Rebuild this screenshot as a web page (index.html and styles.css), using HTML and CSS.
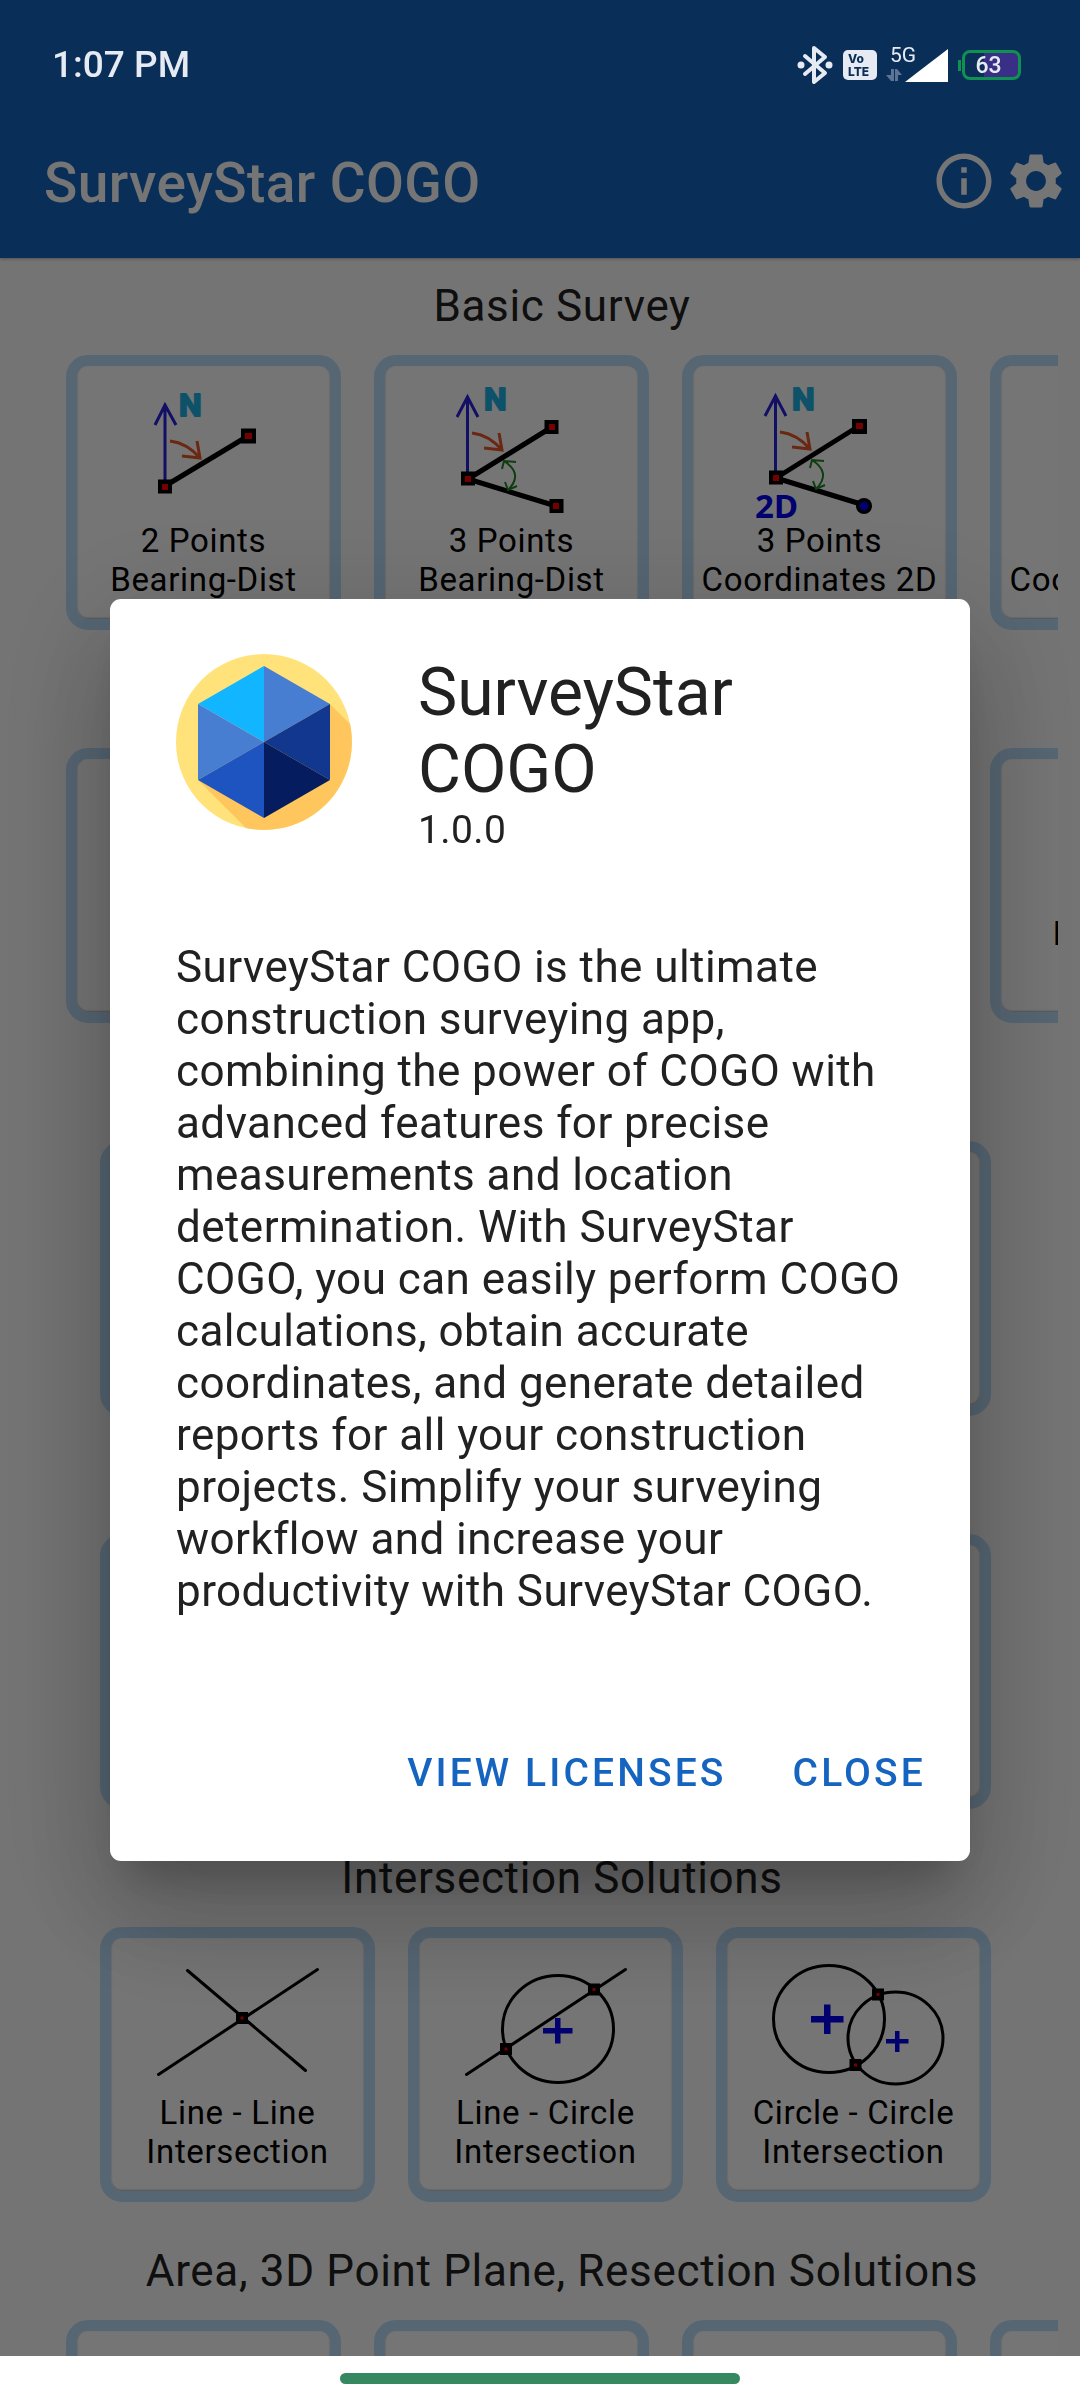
FILE: index.html
```html
<!DOCTYPE html>
<html lang="en">
<head>
<meta charset="utf-8">
<meta name="viewport" content="width=device-width, initial-scale=1">
<title>SurveyStar COGO</title>
<link rel="stylesheet" href="styles.css">
</head>
<body>
<div class="screen">
  <header class="appbar">
    <h1 class="appbar-title">SurveyStar COGO</h1>
    <button class="icon-button" type="button" aria-label="About">
      <svg viewBox="0 0 24 24" width="66" height="66"><path fill="currentColor" d="M11 7h2v2h-2zm0 4h2v6h-2zm1-9C6.48 2 2 6.48 2 12s4.480 10 10 10 10-4.480 10-10S17.520 2 12 2zm0 18c-4.410 0-8-3.590-8-8s3.590-8 8-8 8 3.590 8 8-3.590 8-8 8z"/></svg>
    </button>
    <button class="icon-button" type="button" aria-label="Settings">
      <svg viewBox="0 0 24 24" width="66" height="66"><path fill="currentColor" d="M19.140 12.940c.040-.300.060-.610.060-.940 0-.320-.020-.640-.070-.940l2.030-1.580c.180-.140.230-.410.120-.610l-1.920-3.320c-.120-.220-.370-.290-.590-.220l-2.390.960c-.500-.380-1.030-.700-1.620-.940l-.360-2.540c-.040-.240-.240-.410-.480-.410h-3.840c-.240 0-.430.170-.470.410l-.360 2.540c-.590.240-1.130.570-1.620.940l-2.390-.960c-.220-.080-.470 0-.590.220L2.740 8.870c-.120.210-.080.470.120.610l2.030 1.580c-.050.300-.090.630-.090.940s.020.640.070.940l-2.030 1.580c-.180.140-.230.410-.120.610l1.920 3.320c.120.220.370.290.590.220l2.390-.960c.500.380 1.030.700 1.620.940l.360 2.540c.050.240.240.410.480.410h3.840c.240 0 .440-.170.470-.410l.360-2.540c.590-.240 1.130-.560 1.620-.940l2.390.960c.220.080.470 0 .590-.220l1.920-3.320c.120-.220.070-.470-.120-.610l-2.010-1.580zM12 15.600c-1.980 0-3.600-1.620-3.600-3.600s1.620-3.600 3.600-3.600 3.600 1.620 3.600 3.600-1.620 3.600-3.600 3.600z"/></svg>
    </button>
  </header>

  <main class="content">
    <section class="group">
      <h2 class="group-title">Basic Survey</h2>
      <div class="card-row">
        <button class="card" type="button">
          <svg class="card-art" viewBox="0 0 253 155">
            <path class="north" d="M88 114V38M78 59L88 39L99 59"/>
            <text class="north-letter" x="102" y="50">N</text>
            <path class="bearing" d="M93 75Q110 77 123 92M120 75L123 92L105 90"/>
            <path class="leg" d="M88 120L171 70"/>
            <path d="M81 113.500h14v14h-14zM164 62.500h15v15h-15z"/>
            <path class="red" d="M85 118h6v6h-6zM168 67h7v6h-7z"/>
          </svg>
          <span class="card-label">2 Points<br>Bearing-Dist</span>
        </button>
        <button class="card" type="button">
          <svg class="card-art" viewBox="0 0 253 155">
            <path class="north" d="M82.500 106V30M72 51L82.500 31L93 51"/>
            <text class="north-letter" x="99" y="44">N</text>
            <path class="bearing" d="M87 67Q104 69 117 84M114 67L117 84L99 82"/>
            <path class="leg" d="M83 113L167 61M83 113L171 140"/>
            <path class="turn" d="M119 95Q139 108 123 124M131 96L119 95L117 103M120 116L123 124L132 120"/>
            <path d="M76 105.500h14v14h-14zM159.500 54h14v14h-14zM164.500 133h14v14h-14z"/>
            <path class="red" d="M80 110h6v6h-6zM164 58h6v6h-6zM168 137h6v6h-6z"/>
          </svg>
          <span class="card-label">3 Points<br>Bearing-Dist</span>
        </button>
        <button class="card" type="button">
          <svg class="card-art" viewBox="0 0 253 155">
            <path class="north" d="M82.500 105V29M72 50L82.500 30L93 50"/>
            <text class="north-letter" x="99" y="44">N</text>
            <path class="bearing" d="M87 66Q104 68 117 83M114 66L117 83L99 81"/>
            <path class="leg" d="M83 112L166 60M83 112L171 139"/>
            <path class="turn" d="M119 94Q139 107 123 123M131 95L119 94L117 102M120 115L123 123L132 119"/>
            <path d="M76 104.500h14v14h-14zM159 53h15v15h-15z"/>
            <path class="red" d="M80 109h6v6h-6zM163 57h7v6h-7z"/>
            <circle cx="171" cy="140" r="8"/>
            <circle class="blue" cx="171" cy="140" r="4.500"/>
            <text class="dimension" x="62" y="152">2D</text>
          </svg>
          <span class="card-label">3 Points<br>Coordinates 2D</span>
        </button>
        <button class="card" type="button">
          <svg class="card-art" viewBox="0 0 253 155"></svg>
          <span class="card-label">3 Points<br>Coordinates 3D</span>
        </button>
      </div>
    </section>

    <section class="group">
      <div class="group-title"></div>
      <div class="card-row">
        <div class="card"></div>
        <div class="card"></div>
        <div class="card"></div>
        <button class="card" type="button">
          <svg class="card-art" viewBox="0 0 253 155"></svg>
          <span class="card-label">Extension</span>
        </button>
      </div>
    </section>

    <section class="group">
      <div class="group-title"></div>
      <div class="card-row">
        <div class="card"></div>
        <div class="card"></div>
        <div class="card"></div>
      </div>
    </section>

    <section class="group">
      <div class="group-title"></div>
      <div class="card-row">
        <div class="card"></div>
        <div class="card"></div>
        <div class="card"></div>
      </div>
    </section>

    <section class="group">
      <h2 class="group-title">Intersection Solutions</h2>
      <div class="card-row">
        <button class="card" type="button">
          <svg class="card-art" viewBox="0 0 253 155">
            <path class="thin" d="M76.500 32.500L194.500 132.500M206.500 31.500L47.500 136.500"/>
            <path d="M125 74h12v12h-12z"/>
            <path class="red" d="M129.500 78.500h3v3h-3z"/>
          </svg>
          <span class="card-label">Line - Line<br>Intersection</span>
        </button>
        <button class="card" type="button">
          <svg class="card-art" viewBox="0 0 253 155">
            <path class="thin" d="M206.500 31.500L47.500 136.500"/>
            <ellipse class="thin" cx="139" cy="91" rx="55.500" ry="53.500"/>
            <path class="blue" d="M124 90h12v-10h5.500v10h12v5.500h-12v10h-5.500v-10h-12z"/>
            <path d="M81 105h12v12h-12zM169 45.500h12v12h-12z"/>
            <path class="red" d="M85.500 109.500h3v3h-3zM173.500 50h3v3h-3z"/>
          </svg>
          <span class="card-label">Line - Circle<br>Intersection</span>
        </button>
        <button class="card" type="button">
          <svg class="card-art" viewBox="0 0 253 155">
            <ellipse class="thin" cx="102" cy="81" rx="55.500" ry="53.500"/>
            <ellipse class="thin" cx="168.500" cy="100" rx="47.500" ry="46"/>
            <path class="blue" d="M84 78h13v-11.500h6.500v11.500h13v6.500h-13v11.500h-6.500v-11.500h-13zM159 101h9v-8h4.500v8h9v4.500h-9v8.500h-4.500v-8.500h-9z"/>
            <path d="M145 50.500h12v12h-12zM122.500 121h12v12h-12z"/>
            <path class="red" d="M149.500 55h3v3h-3zM127 125.500h3v3h-3z"/>
          </svg>
          <span class="card-label">Circle - Circle<br>Intersection</span>
        </button>
      </div>
    </section>

    <section class="group">
      <h2 class="group-title">Area, 3D Point Plane, Resection Solutions</h2>
      <div class="card-row">
        <div class="card"></div>
        <div class="card"></div>
        <div class="card"></div>
        <div class="card"></div>
      </div>
    </section>
  </main>
</div>

<div class="overlay">
  <div class="statusbar">
    <span class="clock">1:07 PM</span>
    <svg class="bluetooth" viewBox="0 0 36 40" width="36" height="40">
      <path fill="none" stroke="#e6eaf2" stroke-width="4" stroke-linecap="round" stroke-linejoin="round" d="M8 11L28 28L17 37V3L28 12L8 29"/>
      <circle cx="4" cy="20" r="3.500" fill="#e6eaf2"/><circle cx="32" cy="20" r="3.500" fill="#e6eaf2"/>
    </svg>
    <span class="volte"><span>Vo</span><span>LTE</span></span>
    <span class="network">
      <span class="network-type">5G</span>
      <svg viewBox="0 0 16 12" width="16" height="12"><path fill="#5c7394" d="M5 0h3v12h-3L0 6h5zM9 0h2l5 6h-4v6h-3z"/></svg>
    </span>
    <svg class="signal" viewBox="0 0 43 33" width="43" height="33"><path fill="#fff" d="M43 0V33H0z"/></svg>
    <span class="battery-nub"></span>
    <span class="battery">63</span>
  </div>

  <div class="dialog-area">
    <div class="dialog" role="dialog" aria-modal="true" aria-labelledby="about-title">
      <div class="about-head">
        <svg class="logo" viewBox="0 0 176 176" width="176" height="176">
          <circle cx="88" cy="88" r="88" fill="#ffe27a"/>
          <path fill="#ffc65e" d="M154 50L174 70A88 88 0 0 1 70 174L22 126L88 88z"/>
          <path fill="#12b5ff" d="M88 88L22 50L88 12z"/>
          <path fill="#487ed2" d="M88 88V12L154 50zM88 88L22 126V50z"/>
          <path fill="#12378f" d="M88 88L154 50V126z"/>
          <path fill="#051d5e" d="M88 88L154 126L88 164z"/>
          <path fill="#1d54bf" d="M88 88V164L22 126z"/>
        </svg>
        <div class="about-name">
          <h2 class="about-title" id="about-title">SurveyStar COGO</h2>
          <p class="about-version">1.0.0</p>
        </div>
      </div>
      <p class="about-text">SurveyStar COGO is the ultimate construction surveying app, combining the power of COGO with advanced features for precise measurements and location determination. With SurveyStar COGO, you can easily perform COGO calculations, obtain accurate coordinates, and generate detailed reports for all your construction projects. Simplify your surveying workflow and increase your productivity with SurveyStar COGO.</p>
      <div class="actions">
        <button class="action" type="button">VIEW LICENSES</button>
        <button class="action" type="button">CLOSE</button>
      </div>
    </div>
  </div>

  <div class="navbar"><span class="nav-handle"></span></div>
</div>
</body>
</html>
```
FILE: styles.css
```css
* {
  box-sizing: border-box;
}

body {
  margin: 0;
  font-family: Roboto, "Liberation Sans", sans-serif;
  color: #212121;
}

h1, h2, p {
  margin: 0;
  font-weight: 400;
}

button {
  padding: 0;
  border: 0;
  background: none;
  font: inherit;
  color: inherit;
}

svg {
  display: block;
  flex: none;
}

/* App screen */

.screen {
  display: flex;
  flex-direction: column;
  height: 100vh;
  overflow: hidden;
  background: #fdfdfd;
}

.appbar {
  display: flex;
  align-items: center;
  gap: 6px;
  height: 258px;
  flex: none;
  padding: 104px 11px 0 44px;
  background: #1565c0;
  color: #fff;
  box-shadow: 0 1px 3px rgba(0, 0, 0, 0.3);
}

.appbar-title {
  flex: 1;
  padding-top: 4px;
  font-size: 55px;
  line-height: 64px;
  font-weight: 500;
  letter-spacing: 0.0075em;
}

.content {
  flex: 1;
  min-height: 0;
  overflow: hidden;
  padding: 22px 22px 44px;
}

.group {
  margin-bottom: 43px;
}

.group-title {
  height: 52px;
  margin: 0 0 23px 44px;
  font-size: 44px;
  line-height: 52px;
  letter-spacing: 0.015em;
  text-align: center;
}

.card-row {
  display: flex;
  justify-content: safe center;
  gap: 33px;
  padding: 0 33px 0 44px;
  overflow: hidden;
}

.card {
  display: flex;
  flex: none;
  flex-direction: column;
  width: 275px;
  height: 275px;
  border: 11px solid #bbdefb;
  border-radius: 22px;
  background: #fff;
  color: #000;
  box-shadow: inset 0 -1px 2px rgba(0, 0, 0, 0.3);
}

.card-art {
  width: 253px;
  height: 155px;
}

.card-label {
  align-self: stretch;
  font-size: 33px;
  line-height: 39px;
  letter-spacing: 0.02em;
  text-align: center;
  white-space: nowrap;
}

/* Survey drawings */

.north, .bearing, .turn, .leg, .thin {
  fill: none;
  stroke-width: 3;
}

.north { stroke: #2a22dc; }
.bearing { stroke: #e85525; }
.turn { stroke: #1e8523; stroke-width: 2; }
.leg { stroke: #000; stroke-width: 5; }
.thin { stroke: #000; stroke-linecap: round; }
.red { fill: #f00; }
.blue { fill: #0000f0; }

.north-letter {
  fill: #1eb4e4;
  stroke: #1eb4e4;
  stroke-width: 2;
  stroke-linejoin: round;
  font: 700 32px Roboto, sans-serif;
}

.dimension {
  fill: #0000f0;
  font: 700 33px "Open Sans", sans-serif;
}

/* System bars and modal layer */

.overlay {
  position: fixed;
  inset: 0;
  display: flex;
  flex-direction: column;
  background: rgba(0, 0, 0, 0.54);
}

.statusbar {
  display: flex;
  align-items: center;
  height: 104px;
  flex: none;
  padding: 26px 59px 0 52px;
  color: #e6eaf2;
}

.clock {
  flex: 1;
  font-size: 37px;
  line-height: 44px;
  font-weight: 500;
}

.volte {
  display: flex;
  flex-direction: column;
  align-items: flex-start;
  width: 34px;
  height: 30px;
  margin-left: 10px;
  padding: 2px 5px;
  border-radius: 5px;
  background: #e6eaf2;
  color: #0a2e58;
  font: 800 12px/13px Inter, sans-serif;
}

.network {
  display: flex;
  flex-direction: column;
  gap: 4px;
  width: 30px;
  margin-left: 9px;
  padding-bottom: 4px;
}

.network-type {
  align-self: flex-end;
  font-size: 21px;
  line-height: 20px;
}

.signal {
  margin: 0 10px 0 -11px;
}

.battery-nub {
  width: 3px;
  height: 11px;
  margin-right: 1px;
  background: #0f9152;
}

.battery {
  width: 59px;
  height: 30px;
  padding-right: 6px;
  border: 3px solid #0f9152;
  border-radius: 8px;
  background: linear-gradient(90deg, #0a2e58 35%, #3a2f86 35%);
  font-size: 23px;
  line-height: 25px;
  font-weight: 500;
  text-align: center;
}

.dialog-area {
  display: flex;
  flex: 1;
  align-items: center;
  padding: 0 110px;
}

.dialog {
  flex: 1;
  padding: 55px 22px 39px;
  border-radius: 11px;
  background: #fff;
  box-shadow: 0 30px 40px -18px rgba(0, 0, 0, 0.2), 0 66px 104px 8px rgba(0, 0, 0, 0.14), 0 24px 126px 22px rgba(0, 0, 0, 0.12);
}

.about-head {
  display: flex;
  gap: 66px;
  padding: 0 44px;
}

.about-title {
  font-size: 66px;
  line-height: 77px;
}

.about-version {
  font-size: 39px;
  line-height: 45px;
  letter-spacing: 0.01em;
}

.about-text {
  padding: 88px 44px 106px;
  font-size: 44px;
  line-height: 52px;
  letter-spacing: 0.01em;
}

.actions {
  display: flex;
  justify-content: flex-end;
  gap: 22px;
}

.action {
  height: 99px;
  padding: 0 22px;
  color: #1565c0;
  font-size: 39px;
  font-weight: 500;
  letter-spacing: 0.08em;
}

.navbar {
  display: flex;
  align-items: center;
  justify-content: center;
  height: 44px;
  flex: none;
  background: #fff;
}

.nav-handle {
  width: 37%;
  height: 11px;
  border-radius: 6px;
  background: #358860;
}
```
